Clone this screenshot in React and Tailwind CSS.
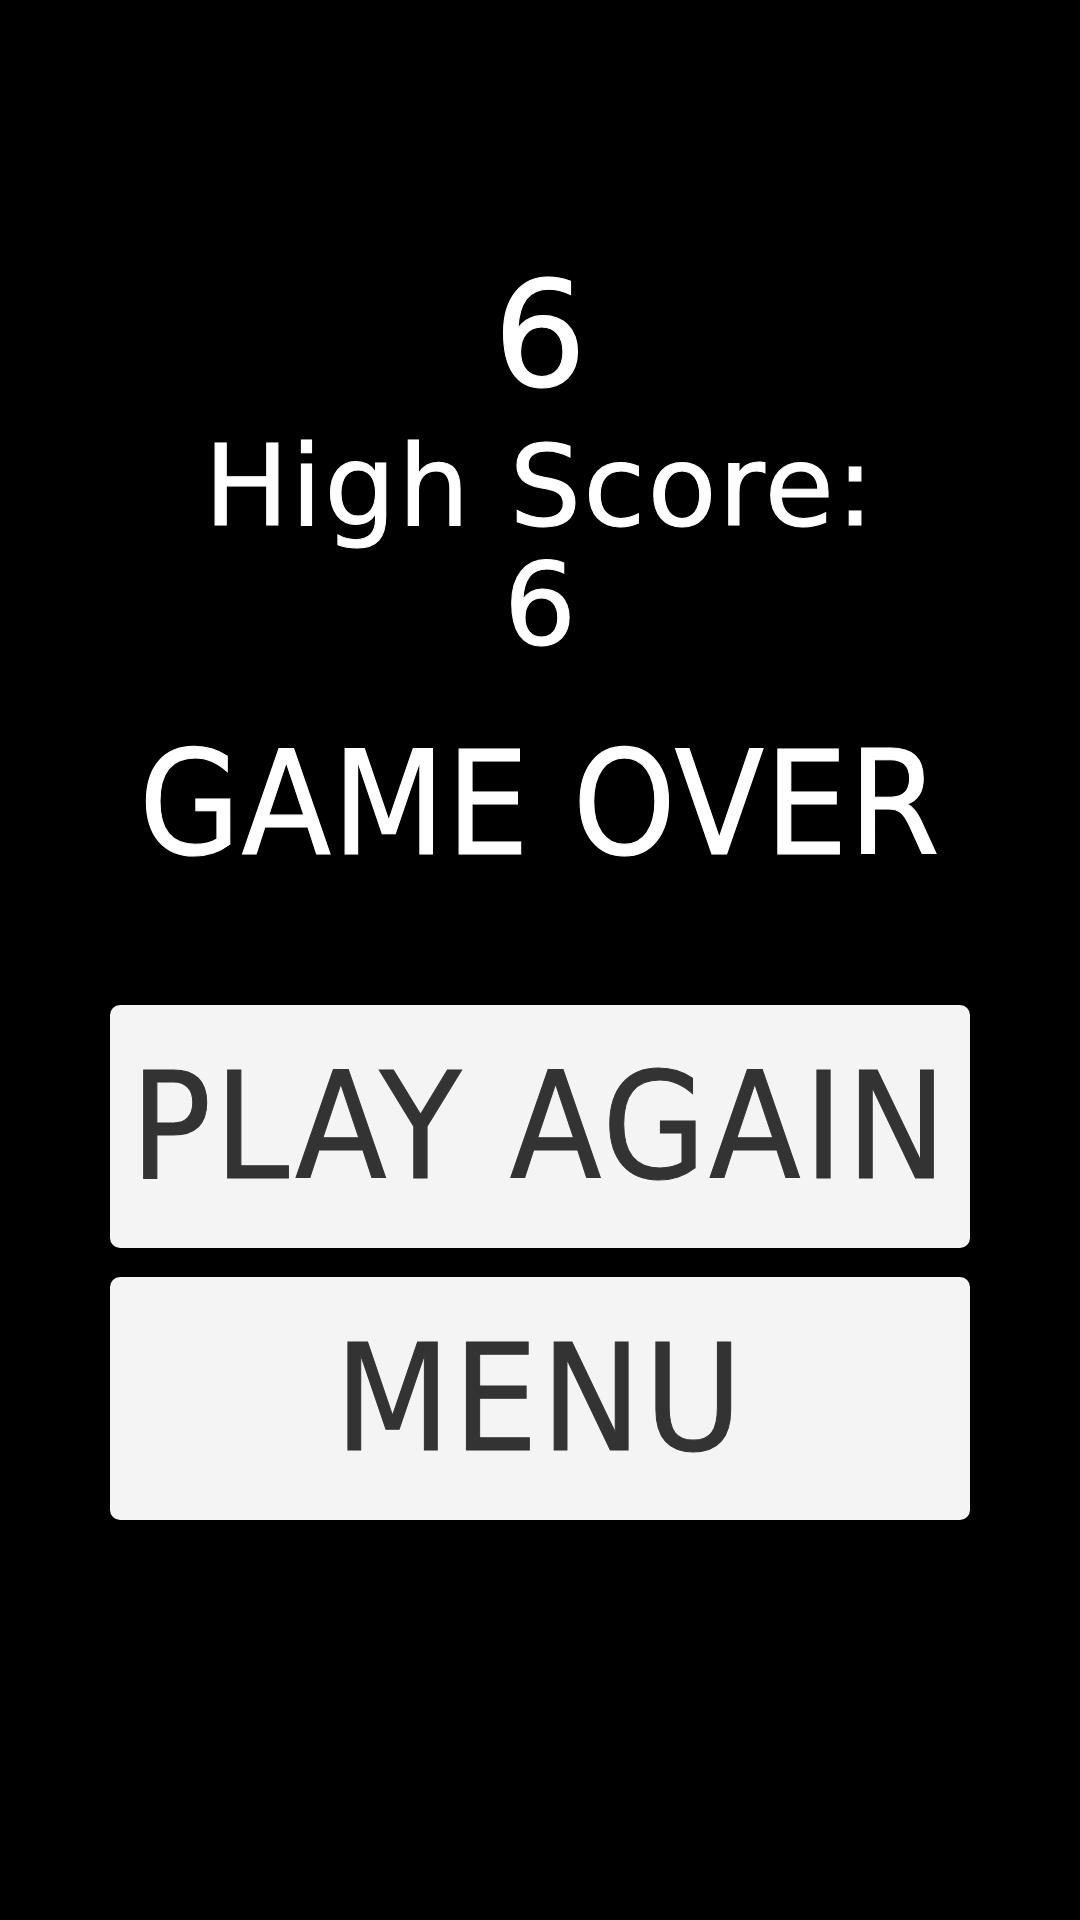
import React from "react";

const font = { fontFamily: '"DejaVu Sans", Verdana, sans-serif' };

export default function App() {
  const score = 6;
  const best = 6;

  return (
    <div className="w-[1080px] h-[1920px] bg-black flex flex-col items-center [-webkit-text-stroke:1px_currentColor]" style={font}>
      <div className="mt-[262px] text-white text-[147px] leading-none">{score}</div>
      <div className="mt-[21px] text-white text-[113px] leading-none tracking-[2px]">High Score:</div>
      <div className="mt-[5px] text-white text-[114px] leading-none">{best}</div>
      <div className="mt-[76px] text-white text-[131px] leading-none tracking-[1px] scale-y-110">GAME OVER</div>

      <div className="mt-[136px] w-[860px] flex flex-col gap-[29px]">
        <button className="h-[243px] w-full rounded-[10px] bg-[#f4f4f4] text-[#333333] text-[134px] leading-none flex items-center justify-center">
          <span className="scale-y-110 whitespace-nowrap tracking-[3px]">PLAY AGAIN</span>
        </button>
        <button className="h-[243px] w-full rounded-[10px] bg-[#f4f4f4] text-[#333333] text-[134px] leading-none flex items-center justify-center">
          <span className="scale-y-110 whitespace-nowrap tracking-[3px]">MENU</span>
        </button>
      </div>
    </div>
  );
}
